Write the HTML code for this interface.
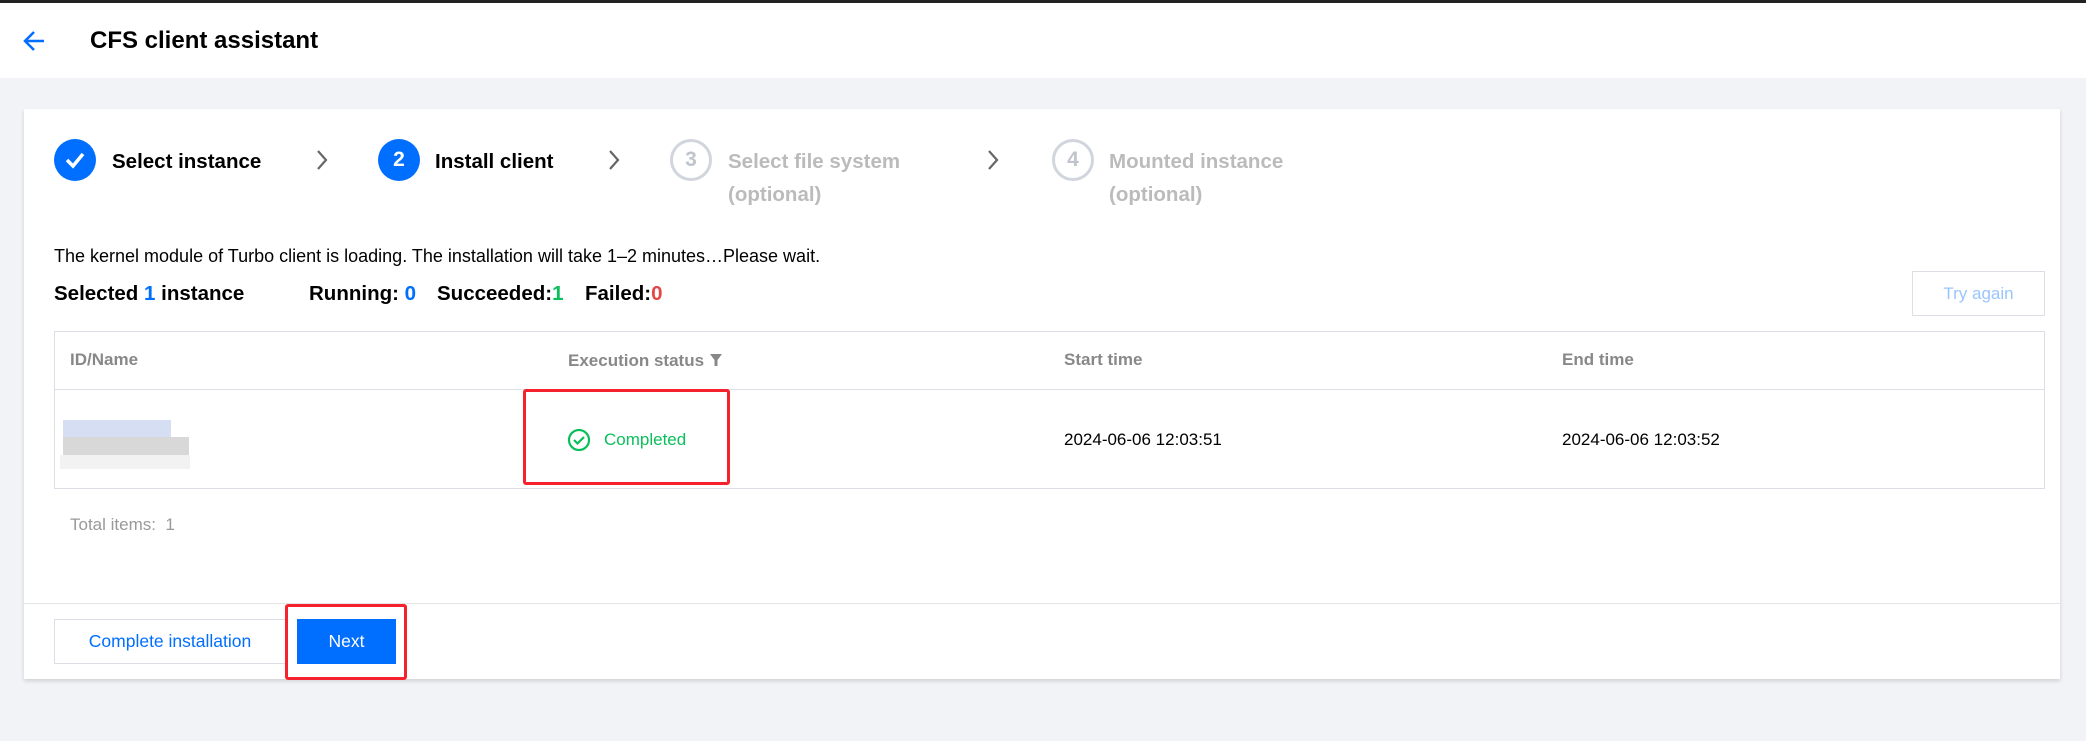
<!DOCTYPE html>
<html><head><meta charset="utf-8"><style>
*{margin:0;padding:0;box-sizing:border-box}
body{width:2086px;height:741px;background:#f2f3f7;font-family:"Liberation Sans",Arial,sans-serif;position:relative;overflow:hidden}
.a{position:absolute;white-space:nowrap}
.hdr{left:0;top:0;width:2086px;height:78px;background:#fff;border-top:3px solid #222}
.card{left:24px;top:109px;width:2036px;height:570px;background:#fff;box-shadow:0 2px 4px rgba(0,0,0,.15)}
.circ{width:42px;height:42px;border-radius:50%;text-align:center;line-height:42px;font-size:21px;font-weight:bold}
.blue{background:#006eff;color:#fff}
.grey{border:3px solid #d1d5dd;color:#c0c4cc;line-height:36px}
.st{font-size:20.5px;font-weight:bold;color:#000}
.sg{font-size:20.5px;font-weight:bold;color:#bbb}
.th{font-size:17px;font-weight:bold;color:#888}
.td{font-size:17px;color:#000}
</style></head><body>
<div class="a hdr"></div>
<svg class="a" style="left:22px;top:28px" width="26" height="26" viewBox="0 0 26 26"><path d="M22 13H4M12 4L3 13l9 9" stroke="#006eff" stroke-width="2.5" fill="none"/></svg>
<div class="a" style="left:90px;top:27px;font-size:24px;font-weight:bold;color:#000">CFS client assistant</div>
<div class="a card"></div>

<div class="a circ blue" style="left:54px;top:139px"><svg width="42" height="42" viewBox="0 0 42 42"><path d="M13 21l6 6 10-12" stroke="#fff" stroke-width="3.5" fill="none"/></svg></div>
<div class="a st" style="left:112px;top:150px">Select instance</div>
<svg class="a" style="left:315px;top:149px" width="14" height="22"><path d="M3 2l8 9-8 9" stroke="#666" stroke-width="2.2" fill="none"/></svg>
<div class="a circ blue" style="left:378px;top:139px">2</div>
<div class="a st" style="left:435px;top:150px">Install client</div>
<svg class="a" style="left:607px;top:149px" width="14" height="22"><path d="M3 2l8 9-8 9" stroke="#666" stroke-width="2.2" fill="none"/></svg>
<div class="a circ grey" style="left:670px;top:139px">3</div>
<div class="a sg" style="left:728px;top:150px">Select file system</div>
<div class="a sg" style="left:728px;top:183px">(optional)</div>
<svg class="a" style="left:986px;top:149px" width="14" height="22"><path d="M3 2l8 9-8 9" stroke="#666" stroke-width="2.2" fill="none"/></svg>
<div class="a circ grey" style="left:1052px;top:139px">4</div>
<div class="a sg" style="left:1109px;top:150px">Mounted instance</div>
<div class="a sg" style="left:1109px;top:183px">(optional)</div>

<div class="a" style="left:54px;top:246px;font-size:18px;color:#000">The kernel module of Turbo client is loading. The installation will take 1–2 minutes…Please wait.</div>
<div class="a" style="left:54px;top:282px;font-size:20.5px;font-weight:bold;color:#000">Selected <span style="color:#006eff">1</span> instance</div>
<div class="a" style="left:309px;top:282px;font-size:20.5px;font-weight:bold;color:#000">Running: <span style="color:#006eff">0</span></div>
<div class="a" style="left:437px;top:282px;font-size:20.5px;font-weight:bold;color:#000">Succeeded:<span style="color:#0abf5b">1</span></div>
<div class="a" style="left:585px;top:282px;font-size:20.5px;font-weight:bold;color:#000">Failed:<span style="color:#e54545">0</span></div>
<div class="a" style="left:1912px;top:271px;width:133px;height:45px;border:1px solid #dcdfe6;color:#99c5ff;font-size:17px;text-align:center;line-height:43px">Try again</div>

<div class="a" style="left:54px;top:331px;width:1991px;height:158px;border:1px solid #dcdfe6"></div>
<div class="a" style="left:54px;top:389px;width:1991px;height:1px;background:#dcdfe6"></div>
<div class="a th" style="left:70px;top:350px">ID/Name</div>
<div class="a th" style="left:568px;top:351px">Execution status <svg width="14" height="14" viewBox="0 0 14 14" style="vertical-align:-1px"><path d="M1 1h12L8.5 7v6h-3V7z" fill="#888"/></svg></div>
<div class="a th" style="left:1064px;top:350px">Start time</div>
<div class="a th" style="left:1562px;top:350px">End time</div>
<div class="a" style="left:63px;top:420px;width:108px;height:17px;background:#d5def2"></div>
<div class="a" style="left:63px;top:437px;width:126px;height:18px;background:#d8d8d8"></div>
<div class="a" style="left:60px;top:455px;width:130px;height:14px;background:#f2f2f2"></div>
<svg class="a" style="left:567px;top:428px" width="24" height="24" viewBox="0 0 24 24"><circle cx="12" cy="12" r="10" stroke="#0abf5b" stroke-width="2.2" fill="none"/><path d="M7 12l3.5 3.5L17 9" stroke="#0abf5b" stroke-width="2.2" fill="none"/></svg>
<div class="a" style="left:604px;top:430px;font-size:17px;color:#0abf5b">Completed</div>
<div class="a td" style="left:1064px;top:430px">2024-06-06 12:03:51</div>
<div class="a td" style="left:1562px;top:430px">2024-06-06 12:03:52</div>
<div class="a" style="left:523px;top:389px;width:207px;height:96px;border:3px solid #f5222d;border-radius:3px"></div>
<div class="a" style="left:70px;top:515px;font-size:17px;color:#999">Total items:&nbsp; 1</div>

<div class="a" style="left:24px;top:603px;width:2036px;height:1px;background:#e5e5e5"></div>
<div class="a" style="left:54px;top:619px;width:232px;height:45px;border:1px solid #dcdfe6;color:#006eff;font-size:17.5px;text-align:center;line-height:43px">Complete installation</div>
<div class="a" style="left:297px;top:619px;width:99px;height:45px;background:#006eff;color:#fff;font-size:17.5px;text-align:center;line-height:45px">Next</div>
<div class="a" style="left:285px;top:604px;width:122px;height:76px;border:3px solid #f5222d;border-radius:3px"></div>
</body></html>
